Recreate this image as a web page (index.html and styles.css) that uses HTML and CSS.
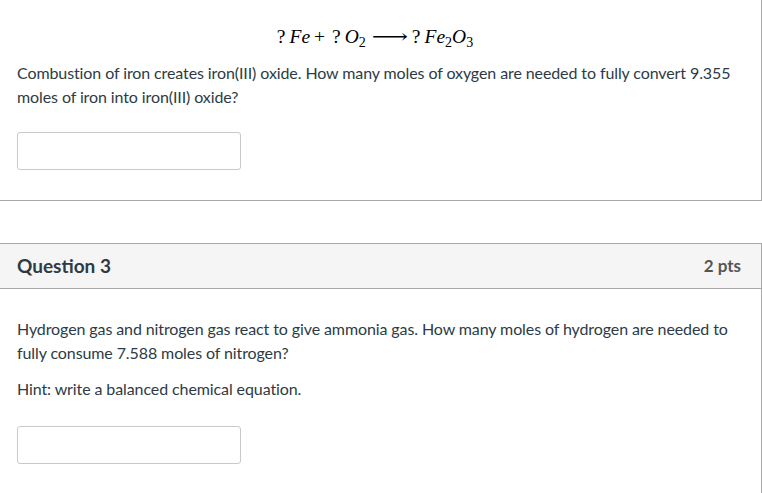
FILE: index.html
```html
<!DOCTYPE html>
<html>
<head>
<meta charset="utf-8">
<link rel="stylesheet" href="styles.css">
</head>
<body>
<div class="page">
  <section class="card card-first">
    <div class="card-body">
      <div class="equation">
        <span class="q">?</span><span class="v">Fe</span><span class="op">+</span><span class="q">?</span><span class="v">O</span><sub>2</sub><span class="arrow">⟶</span><span class="q">?</span><span class="v">Fe</span><sub>2</sub><span class="v">O</span><sub>3</sub>
      </div>
      <p class="text">Combustion of iron creates iron(III) oxide. How many moles of oxygen are needed to fully convert 9.355 moles of iron into iron(III) oxide?</p>
      <input class="answer" type="text">
    </div>
  </section>

  <section class="card card-second">
    <header class="card-header">
      <h2 class="title">Question 3</h2>
      <span class="pts">2 pts</span>
    </header>
    <div class="card-body body-second">
      <p class="text">Hydrogen gas and nitrogen gas react to give ammonia gas. How many moles of hydrogen are needed to fully consume 7.588 moles of nitrogen?</p>
      <p class="text">Hint: write a balanced chemical equation.</p>
      <input class="answer answer-second" type="text">
    </div>
  </section>
</div>
</body>
</html>
```

FILE: styles.css
```css
html, body {
  margin: 0;
  padding: 0;
  background: #ffffff;
  overflow: hidden;
}
body {
  font-family: Lato, "Liberation Sans", sans-serif;
  color: #2d3b45;
  font-size: 16px;
  line-height: 24px;
}
.page {
  width: 762px;
}
.card {
  border-right: 1px solid #a9a9a9;
  border-bottom: 1px solid #a9a9a9;
  box-sizing: border-box;
  width: 762px;
}
.card-first {
  height: 201px;
}
.card-second {
  margin-top: 42px;
  border-top: 1px solid #a9a9a9;
  height: 260px;
}
.card-body {
  padding: 0 20px 0 17px;
}
.equation {
  font-family: "Liberation Serif", "DejaVu Serif", serif;
  font-size: 19.5px;
  line-height: 24px;
  padding-top: 25px;
  text-align: center;
  padding-right: 8px;
  color: #000;
  white-space: nowrap;
}
.equation .v {
  font-style: italic;
}
.equation .q {
  margin-right: 4px;
}
.equation .op {
  margin: 0 7px 0 4px;
}
.equation sub {
  font-size: 14px;
  line-height: 0;
  vertical-align: -4px;
}
.equation .arrow {
  display: inline-block;
  transform: scaleX(1.3);
  margin: 0 8px 0 10px;
}
.text {
  margin: 12px 0 0 0;
  letter-spacing: -0.1px;
}
.answer {
  display: block;
  box-sizing: border-box;
  width: 224px;
  height: 38px;
  margin-top: 23px;
  border: 1px solid #c9c9c9;
  border-radius: 3px;
  background: #fff;
  padding: 0;
}
.card-header {
  display: flex;
  justify-content: space-between;
  align-items: center;
  height: 44px;
  background: #f5f5f5;
  border-bottom: 1px solid #a9a9a9;
  padding: 0 20px 0 17px;
}
.title {
  margin: 0;
  font-size: 19px;
  font-weight: 700;
  color: #2d3b45;
}
.pts {
  font-size: 17px;
  font-weight: 700;
  color: #555555;
}
.body-second {
  padding-top: 16px;
}
.answer-second {
  margin-top: 25px;
}
```
